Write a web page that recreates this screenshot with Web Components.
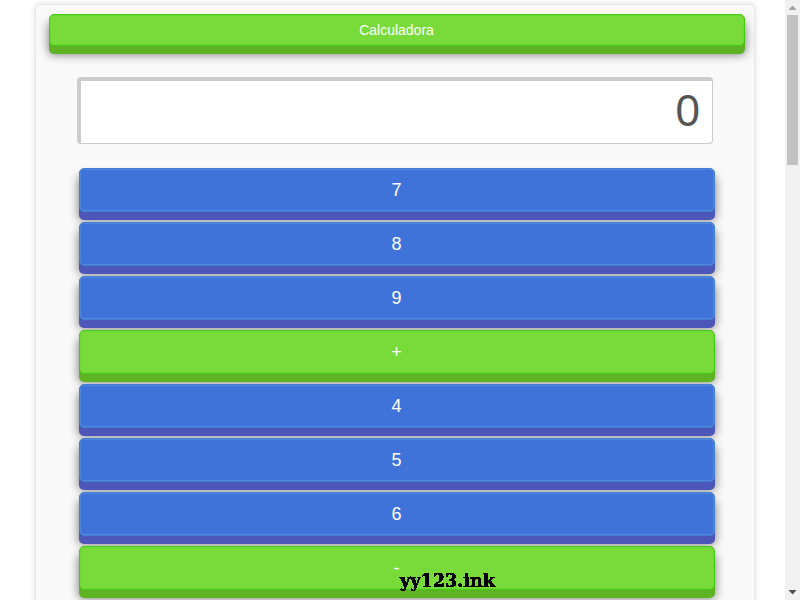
<!DOCTYPE html>
<html lang="es">
<head>
<meta charset="utf-8">
<title>Calculadora</title>
<style>
    html { background: #fff; }
    body {
        margin: 0;
        min-height: 2280px;
        font-family: "Liberation Sans", Arial, sans-serif;
    }
</style>
</head>
<body>
<calc-app></calc-app>
<site-mark>yy123.ink</site-mark>
<scroll-rail></scroll-rail>

<script>
class CalcButton extends HTMLElement {
    constructor() {
        super();
        this.attachShadow({ mode: 'open' });
        this.shadowRoot.innerHTML = `
            <style>
                :host { display: block; }
                button {
                    display: block;
                    width: 100%;
                    height: 44px;
                    margin: 0 0 10px;
                    padding: 0 1px 0 0;
                    box-sizing: border-box;
                    border: 1px solid var(--edge);
                    border-radius: 5px;
                    background: var(--face);
                    color: #fff;
                    font: 18px "Liberation Sans", Arial, sans-serif;
                    box-shadow: inset 0 0 0 1px var(--glow), 0 8px 0 0 var(--side), 0 8px 10px 1px rgba(0, 0, 0, 0.45);
                    cursor: pointer;
                }
                :host([kind="green"]) {
                    --face: #78db3a;
                    --edge: #44c914;
                    --glow: #6cd935;
                    --side: #5db324;
                }
                :host(:not([kind="green"])) {
                    --face: #3f73d9;
                    --edge: #3f7fcf;
                    --glow: #5285dd;
                    --side: #4d57ba;
                }
                :host([small]) button { height: 32px; font-size: 14px; }
            </style>
            <button><slot></slot></button>
        `;
    }
}

class CalcDisplay extends HTMLElement {
    constructor() {
        super();
        this.attachShadow({ mode: 'open' });
        this.shadowRoot.innerHTML = `
            <style>
                :host { display: block; }
                div {
                    height: 67px;
                    box-sizing: border-box;
                    padding: 0 12px;
                    border: 1px solid #ccc;
                    border-top: 4px solid #ccc;
                    border-left: 4px solid #ccc;
                    border-radius: 4px;
                    background: #fff;
                    color: #555;
                    font: 44px/59px "Liberation Sans", Arial, sans-serif;
                    text-align: right;
                }
            </style>
            <div><slot></slot></div>
        `;
    }
}

class CalcApp extends HTMLElement {
    constructor() {
        super();
        this.attachShadow({ mode: 'open' });
        const keys = ['7', '8', '9', '+', '4', '5', '6', '-', '1', '2', '3', '*', '0', '.', '=', '/', 'C', 'CE'];
        const rows = keys.map(k => {
            const green = '+-*/='.includes(k);
            return `<calc-button${green ? ' kind="green"' : ''}>${k}</calc-button>`;
        }).join('');
        this.shadowRoot.innerHTML = `
            <style>
                :host { display: block; }
                .panel {
                    width: 720px;
                    box-sizing: border-box;
                    margin: 4px 0 20px 35px;
                    padding: 9px 9px 40px 13px;
                    background: #f9f9f9;
                    border: 1px solid #e6e6e6;
                    border-radius: 4px;
                    box-shadow: 0 0 6px rgba(0, 0, 0, 0.12);
                }
                .title { margin-bottom: 31px; }
                .display { margin: 0 32px 24px 28px; }
                .keys { margin: 0 30px; }
            </style>
            <div class="panel">
                <calc-button class="title" kind="green" small>Calculadora</calc-button>
                <div class="display"><calc-display>0</calc-display></div>
                <div class="keys">${rows}</div>
            </div>
        `;
    }
}

class SiteMark extends HTMLElement {
    constructor() {
        super();
        this.attachShadow({ mode: 'open' });
        this.shadowRoot.innerHTML = `
            <style>
                :host {
                    position: fixed;
                    left: 400px;
                    top: 569px;
                    color: #000;
                    font: bold 17.6px/24px "DejaVu Serif", serif;
                }
                span {
                    display: inline-block;
                    -webkit-text-stroke: 0.3px #000;
                    filter: url(#crisp);
                }
                svg { position: absolute; }
            </style>
            <svg width="0" height="0">
                <filter id="crisp" x="-5%" y="-5%" width="110%" height="110%">
                    <feComponentTransfer>
                        <feFuncA type="discrete" tableValues="0 1 1"></feFuncA>
                    </feComponentTransfer>
                </filter>
            </svg>
            <span><slot></slot></span>
        `;
    }
}

// the headless browser paints no scrollbar of its own, so this one is drawn over the page edge
class ScrollRail extends HTMLElement {
    constructor() {
        super();
        this.attachShadow({ mode: 'open' });
        this.shadowRoot.innerHTML = `
            <style>
                :host {
                    position: fixed;
                    top: 0;
                    right: 0;
                    bottom: 0;
                    width: 15px;
                    display: flex;
                    flex-direction: column;
                    background: #f1f1f1;
                }
                svg { display: block; flex: none; }
                .track { flex: 1; padding: 0 2px; }
                .thumb { height: 150px; background: #c1c1c1; }
            </style>
            <svg width="15" height="15" viewBox="0 0 15 15"><path d="M3.5 10 L7.5 5.5 L11.5 10 Z" fill="#a3a3a3"/></svg>
            <div class="track"><div class="thumb"></div></div>
            <svg width="15" height="15" viewBox="0 0 15 15"><path d="M3.5 5 L7.5 9.5 L11.5 5 Z" fill="#505050"/></svg>
        `;
    }
}

customElements.define('calc-button', CalcButton);
customElements.define('calc-display', CalcDisplay);
customElements.define('calc-app', CalcApp);
customElements.define('site-mark', SiteMark);
customElements.define('scroll-rail', ScrollRail);
</script>
</body>
</html>
